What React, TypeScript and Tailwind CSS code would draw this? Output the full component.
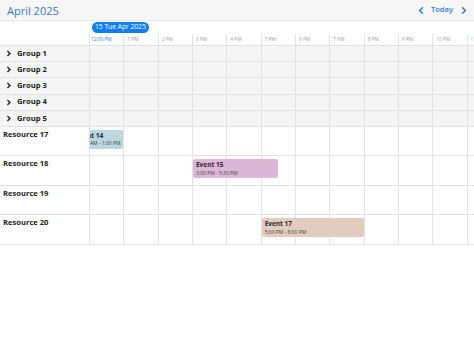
import React from 'react';

const HOURS = ['12:00 PM', '1 PM', '2 PM', '3 PM', '4 PM', '5 PM', '6 PM', '7 PM', '8 PM', '9 PM', '10 PM', '11 PM'];
const COL = 34.33;

interface Ev {
  title: string;
  time: string;
  start: number; // hours from 12 PM
  end: number;
  color: string;
}

const resources: { name: string; events: Ev[] }[] = [
  { name: 'Resource 17', events: [{ title: 'Event 14', time: '11:30 AM - 1:00 PM', start: -0.5, end: 1, color: 'bg-[#bcd8df]' }] },
  { name: 'Resource 18', events: [{ title: 'Event 15', time: '3:00 PM - 5:30 PM', start: 3, end: 5.5, color: 'bg-[#dcb6d6]' }] },
  { name: 'Resource 19', events: [] },
  { name: 'Resource 20', events: [{ title: 'Event 17', time: '5:00 PM - 8:00 PM', start: 5, end: 8, color: 'bg-[#e2cbbf]' }] },
];

function Chevron({ dir, className, width = 1.6 }: { dir: 'left' | 'right'; className?: string; width?: number }) {
  return (
    <svg viewBox="0 0 10 10" className={className} fill="none" stroke="currentColor" strokeWidth={width}>
      {dir === 'left' ? <polyline points="6.5,1.5 3,5 6.5,8.5" /> : <polyline points="3.5,1.5 7,5 3.5,8.5" />}
    </svg>
  );
}

function Cells() {
  return (
    <>
      {HOURS.map((h) => (
        <div key={h} className="w-[34.33px] shrink-0 h-full border-r border-[#e2e2e2]" />
      ))}
    </>
  );
}

export default function App() {
  return (
    <div className="w-[474px] h-[355px] overflow-hidden bg-white font-['Open_Sans',sans-serif] text-[#222]">
      {/* header */}
      <div className="h-[21px] flex items-center justify-between pl-[7px] pr-[6px] bg-[#f7f7f7] border-b border-[#e8e8e8]">
        <div className="text-[11px] leading-none text-[#2f7bd9]">April 2025</div>
        <div className="flex items-center text-[#2f7bd9]">
          <Chevron dir="left" className="w-[9px] h-[9px]" />
          <span className="ml-[5px] mr-[6px] text-[7.6px] font-semibold leading-none">Today</span>
          <Chevron dir="right" className="w-[9px] h-[9px]" />
        </div>
      </div>

      {/* date pill row */}
      <div className="h-[13px] flex items-center">
        <div className="w-[92px] shrink-0" />
        <div className="h-[11px] px-[3px] rounded-full bg-[#0f7ef0] text-white text-[6.7px] leading-none flex items-center whitespace-nowrap">
          15 Tue Apr 2025
        </div>
      </div>

      {/* time label row */}
      <div className="h-[12px] flex border-b border-[#e2e2e2]">
        <div className="w-[90px] shrink-0 border-r border-[#e2e2e2]" />
        {HOURS.map((h, i) => (
          <div
            key={h}
            className={`w-[34.33px] shrink-0 border-r border-[#e2e2e2] pt-[3px] text-[4.8px] leading-none whitespace-nowrap ${
              i === 0 ? 'text-[#2f7bd9] pl-[1px]' : 'text-[#9a9a9a] pl-[3px]'
            }`}
          >
            {h}
          </div>
        ))}
      </div>

      {/* groups */}
      {[1, 2, 3, 4, 5].map((g) => (
        <div key={g} className="h-[16.2px] flex bg-[#f5f5f5] border-b border-[#e2e2e2]">
          <div className="w-[90px] shrink-0 border-r border-[#e2e2e2] flex items-center pl-[5px]">
            <Chevron dir="right" className="w-[7px] h-[7px] text-[#222]" width={2} />
            <span className="ml-[5px] text-[7.6px] font-bold leading-none">Group {g}</span>
          </div>
          <div className="flex h-full">
            <Cells />
          </div>
        </div>
      ))}

      {/* resources */}
      {resources.map((r) => (
        <div key={r.name} className="h-[29.4px] flex border-b border-[#e2e2e2]">
          <div className="w-[90px] shrink-0 border-r border-[#e2e2e2] pl-[3px] pt-[4px] text-[7.6px] font-bold leading-none">
            {r.name}
          </div>
          <div className="relative flex-1 h-full overflow-hidden">
            <div className="flex h-full">
              <Cells />
            </div>
            {r.events.map((e) => (
              <div
                key={e.title}
                className={`absolute top-[3px] h-[19px] rounded-[2px] ${e.color} px-[3px] pt-[3px] whitespace-nowrap`}
                style={{ left: e.start * COL, width: (e.end - e.start) * COL - 1 }}
              >
                <div className="text-[6.5px] font-bold leading-none text-[#2a2a2a]">{e.title}</div>
                <div className="mt-[2px] text-[5px] leading-none text-[#444]">{e.time}</div>
              </div>
            ))}
          </div>
        </div>
      ))}
    </div>
  );
}
